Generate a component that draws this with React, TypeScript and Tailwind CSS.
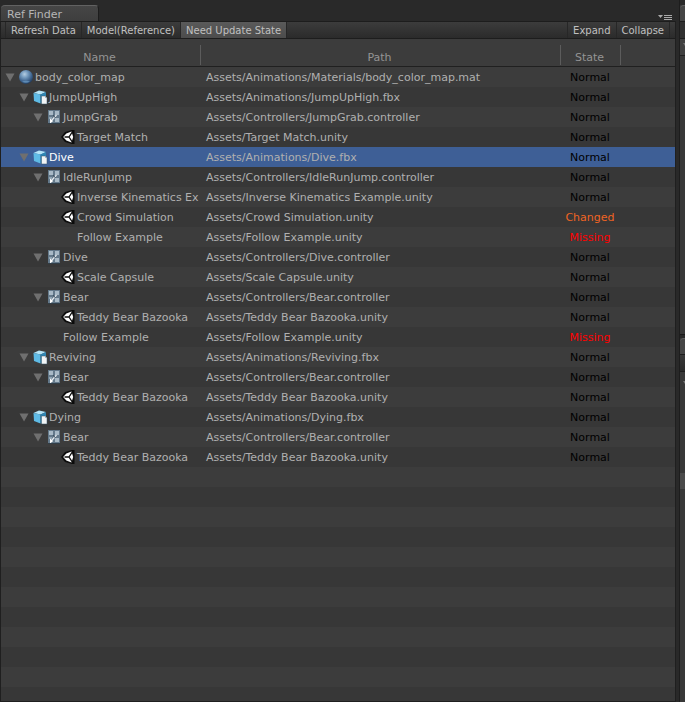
import React from "react";

type Kind = "material" | "model" | "controller" | "scene" | "none";
type State = "Normal" | "Changed" | "Missing";
interface Row {
  depth: 0 | 1 | 2 | 3;
  kind: Kind;
  name: string;
  path: string;
  state?: State;
  selected?: boolean;
}

const rows: Row[] = [
  { depth: 0, kind: "material", name: "body_color_map", path: "Assets/Animations/Materials/body_color_map.mat" },
  { depth: 1, kind: "model", name: "JumpUpHigh", path: "Assets/Animations/JumpUpHigh.fbx" },
  { depth: 2, kind: "controller", name: "JumpGrab", path: "Assets/Controllers/JumpGrab.controller" },
  { depth: 3, kind: "scene", name: "Target Match", path: "Assets/Target Match.unity" },
  { depth: 1, kind: "model", name: "Dive", path: "Assets/Animations/Dive.fbx", selected: true },
  { depth: 2, kind: "controller", name: "IdleRunJump", path: "Assets/Controllers/IdleRunJump.controller" },
  { depth: 3, kind: "scene", name: "Inverse Kinematics Ex", path: "Assets/Inverse Kinematics Example.unity" },
  { depth: 3, kind: "scene", name: "Crowd Simulation", path: "Assets/Crowd Simulation.unity", state: "Changed" },
  { depth: 3, kind: "none", name: "Follow Example", path: "Assets/Follow Example.unity", state: "Missing" },
  { depth: 2, kind: "controller", name: "Dive", path: "Assets/Controllers/Dive.controller" },
  { depth: 3, kind: "scene", name: "Scale Capsule", path: "Assets/Scale Capsule.unity" },
  { depth: 2, kind: "controller", name: "Bear", path: "Assets/Controllers/Bear.controller" },
  { depth: 3, kind: "scene", name: "Teddy Bear Bazooka", path: "Assets/Teddy Bear Bazooka.unity" },
  { depth: 2, kind: "none", name: "Follow Example", path: "Assets/Follow Example.unity", state: "Missing" },
  { depth: 1, kind: "model", name: "Reviving", path: "Assets/Animations/Reviving.fbx" },
  { depth: 2, kind: "controller", name: "Bear", path: "Assets/Controllers/Bear.controller" },
  { depth: 3, kind: "scene", name: "Teddy Bear Bazooka", path: "Assets/Teddy Bear Bazooka.unity" },
  { depth: 1, kind: "model", name: "Dying", path: "Assets/Animations/Dying.fbx" },
  { depth: 2, kind: "controller", name: "Bear", path: "Assets/Controllers/Bear.controller" },
  { depth: 3, kind: "scene", name: "Teddy Bear Bazooka", path: "Assets/Teddy Bear Bazooka.unity" },
];

const indents = ["pl-1", "pl-[18px]", "pl-[32px]", "pl-[46px]"];
const stateColors: Record<State, string> = {
  Normal: "text-black",
  Changed: "text-[#f06423]",
  Missing: "text-[#ff0000]",
};

function MaterialIcon() {
  return (
    <svg viewBox="0 0 16 16" className="h-4 w-4">
      <defs>
        <radialGradient id="ball" cx="0.4" cy="0.3" r="0.72">
          <stop offset="0" stopColor="#b4cde2" />
          <stop offset="0.35" stopColor="#7399bd" />
          <stop offset="0.7" stopColor="#40658f" />
          <stop offset="1" stopColor="#203a5c" />
        </radialGradient>
      </defs>
      <circle cx="8" cy="8" r="7" fill="url(#ball)" />
      <path d="M4 12.5Q8 15 12 12.5Q8 11 4 12.5Z" fill="#6c9cc8" opacity="0.7" />
    </svg>
  );
}

function ModelIcon() {
  return (
    <svg viewBox="0 0 16 16" className="h-4 w-4">
      <path d="M1.5 4L7 1.5L14 3L8.500 5.500Z" fill="#b4e4f7" />
      <path d="M1.5 4L8.500 5.500V14.500L2 12Z" fill="#5fbbe6" />
      <path d="M8.500 5.500L14 3V11L8.500 14.500Z" fill="#2f86b4" />
      <path d="M9.500 7H13L15 9V15H9.500Z" fill="#f2f4f5" stroke="#36566b" strokeWidth="0.5" />
      <path d="M13 7V9H15Z" fill="#aebac2" />
    </svg>
  );
}

function ControllerIcon() {
  return (
    <svg viewBox="0 0 16 16" className="h-4 w-4">
      <rect x="2" y="1" width="12" height="14" fill="#64798a" />
      <rect x="3" y="2" width="4" height="4" fill="#a9bac6" />
      <rect x="9" y="2" width="4" height="4" fill="#a9bac6" />
      <rect x="9" y="9" width="4" height="4" fill="#a9bac6" />
      <rect x="3" y="8" width="3" height="2" fill="#8fa3b0" />
      <path d="M6 11L10.5 6" stroke="#e6ebef" strokeWidth="1.2" />
      <path d="M7 6L9.5 9" stroke="#3d505e" strokeWidth="1" />
      <path d="M4 9.5L7.2 12L4 14.5Z" fill="#ffffff" />
      <path d="M2 14.500H14" stroke="#303d47" />
    </svg>
  );
}

function SceneIcon() {
  return (
    <svg viewBox="0 0 16 16" className="h-4 w-4">
      <path d="M1 8L5 3L12 1H14.500V15H12L5 13Z" fill="#0c0c0c" />
      <path d="M3.2 8L6.300 4.400L11.500 2.500L13.200 8L11.500 13.500L6.300 11.600Z" fill="#ffffff" />
      <path d="M4.500 8H9M9 8L12 3.300M9 8L12 12.700" stroke="#101010" strokeWidth="1.3" />
    </svg>
  );
}

function KindIcon({ kind }: { kind: Kind }) {
  if (kind === "material") return <MaterialIcon />;
  if (kind === "model") return <ModelIcon />;
  if (kind === "controller") return <ControllerIcon />;
  if (kind === "scene") return <SceneIcon />;
  return null;
}

function Foldout() {
  return (
    <button type="button" aria-label="Toggle children" className="block h-3 w-3">
      <svg viewBox="0 0 12 12" className="h-3 w-3">
        <path d="M0.500 2.500H9.500L5 10.500Z" fill="#6f6f6f" />
      </svg>
    </button>
  );
}

function ToolButton({ children, active = false }: { children: React.ReactNode; active?: boolean }) {
  return (
    <button
      type="button"
      className={
        "h-4 border-r border-[#272727] px-[5px] text-[10px] leading-[18px] whitespace-nowrap text-[#c0c0c0] " +
        (active ? "bg-linear-to-b from-[#5a5a5a] to-[#4c4c4c]" : "")
      }
    >
      {children}
    </button>
  );
}

function HeaderCell({ children, divider = true }: { children?: React.ReactNode; divider?: boolean }) {
  return (
    <th scope="col" className="h-7 border-b border-[#202020] p-0 font-normal">
      <div className={"mt-1 h-5 pt-1 pr-[2px] leading-[18px] text-[#949494] " + (divider ? "border-r border-[#5c5c5c]" : "")}>
        {children}
      </div>
    </th>
  );
}

function SidePanels() {
  return (
    <aside className="flex w-[6px] shrink-0 flex-col overflow-hidden border-l border-[#1d1d1d] bg-[#383838]">
      <div className="h-[5px] shrink-0 bg-[#292929]" />
      <div className="h-4 shrink-0 rounded-tl-sm border-t border-[#606060] bg-[#454545]" />
      <div className="h-[18px] shrink-0 border-y border-[#1d1d1d] bg-[#303030]" />
      <div className="h-[17px] shrink-0 border-b border-[#202020] bg-[#404040]">
        <svg viewBox="0 0 5 6" className="mt-1 h-[6px] w-[5px]"><path d="M3 0H5V3Z" fill="#777" /></svg>
      </div>
      <div className="h-[278px] shrink-0" />
      <div className="h-[4px] shrink-0 border-t border-[#1a1a1a] bg-[#292929]" />
      <div className="h-4 shrink-0 rounded-tl-sm border-t border-[#606060] bg-[#454545]" />
      <div className="h-[18px] shrink-0 border-y border-[#1d1d1d] bg-linear-to-b from-[#383838] to-[#2a2a2a]" />
      <div className="h-[101px] shrink-0 pt-2">
        <svg viewBox="0 0 5 6" className="h-[6px] w-[5px]"><path d="M3 1H5V4Z" fill="#777" /></svg>
      </div>
      <div className="h-4 shrink-0 bg-[#4a4a4a]" />
      <div className="flex-1" />
    </aside>
  );
}

export default function App() {
  return (
    <div className="flex h-screen min-h-[500px] overflow-hidden bg-[#292929] font-['DejaVu_Sans',sans-serif] text-[11px]">
      <main className="flex min-w-0 flex-1 flex-col">
        <header className="flex h-[21px] shrink-0 items-end justify-between pl-px">
          <h1 className="h-4 w-[98px] rounded-t-sm border-t border-r border-t-[#626262] border-r-[#1d1d1d] bg-linear-to-b from-[#464646] to-[#3e3e3e] pl-[6px] leading-[18px] text-[#b6b6b6]">
            Ref Finder
          </h1>
          <button type="button" aria-label="Window menu" className="h-[9px] w-[18px]">
            <svg viewBox="0 0 18 9" className="h-[9px] w-[18px]">
              <path d="M0 3H5L2.5 6Z" fill="#aaaaaa" />
              <path d="M6 3.500H14M6 5.500H14M6 7.500H14" stroke="#aaaaaa" />
            </svg>
          </button>
        </header>

        <div className="flex min-h-0 flex-1 flex-col border-x border-b border-[#1f1f1f] bg-[#3c3c3c]">
          <nav className="flex h-[18px] shrink-0 border-y border-[#1d1d1d] bg-linear-to-b from-[#3c3c3c] to-[#2b2b2b]">
            <div className="w-[5px] border-r border-[#272727]" />
            <ToolButton>Refresh Data</ToolButton>
            <ToolButton>Model(Reference)</ToolButton>
            <ToolButton active>Need Update State</ToolButton>
            <div className="flex-1 border-r border-[#272727]" />
            <ToolButton>Expand</ToolButton>
            <ToolButton>Collapse</ToolButton>
            <div className="w-[5px]" />
          </nav>

          <table className="w-full shrink-0 table-fixed border-separate border-spacing-0 text-[#b0b0b0]">
            <colgroup>
              <col className="w-[200px]" />
              <col />
              <col className="w-[60px]" />
              <col className="w-[54px]" />
            </colgroup>
            <thead>
              <tr>
                <HeaderCell>Name</HeaderCell>
                <HeaderCell>Path</HeaderCell>
                <HeaderCell>State</HeaderCell>
                <HeaderCell divider={false} />
              </tr>
            </thead>
            <tbody>
              {rows.map((row, i) => {
                const state = row.state ?? "Normal";
                const leaf = row.depth === 3 || row.kind === "none";
                return (
                  <tr
                    key={i}
                    aria-selected={row.selected}
                    className={row.selected ? "bg-[#3e5f96]" : "odd:bg-[#3c3c3c] even:bg-[#373737]"}
                  >
                    <td className="h-5 p-0">
                      <div className={"flex h-5 items-center " + indents[row.depth]}>
                        <span className="h-3 w-[13px] shrink-0">{!leaf && <Foldout />}</span>
                        <span className="h-4 w-[17px] shrink-0">
                          <KindIcon kind={row.kind} />
                        </span>
                        <span className={"pt-[2px] leading-[18px] whitespace-nowrap " + (row.selected ? "text-white" : "")}>
                          {row.name}
                        </span>
                      </div>
                    </td>
                    <td className="truncate p-0 pt-[2px] pl-[5px] leading-[18px]">{row.path}</td>
                    <td className={"p-0 pt-[2px] pr-[2px] text-center leading-[18px] " + stateColors[state]}>{state}</td>
                    <td className="p-0" />
                  </tr>
                );
              })}
            </tbody>
          </table>
          <div className="min-h-0 flex-1 bg-[repeating-linear-gradient(to_bottom,#3c3c3c_0px,#3c3c3c_20px,#373737_20px,#373737_40px)]" />
        </div>
      </main>
      <div className="w-[3px] shrink-0" />
      <SidePanels />
    </div>
  );
}
